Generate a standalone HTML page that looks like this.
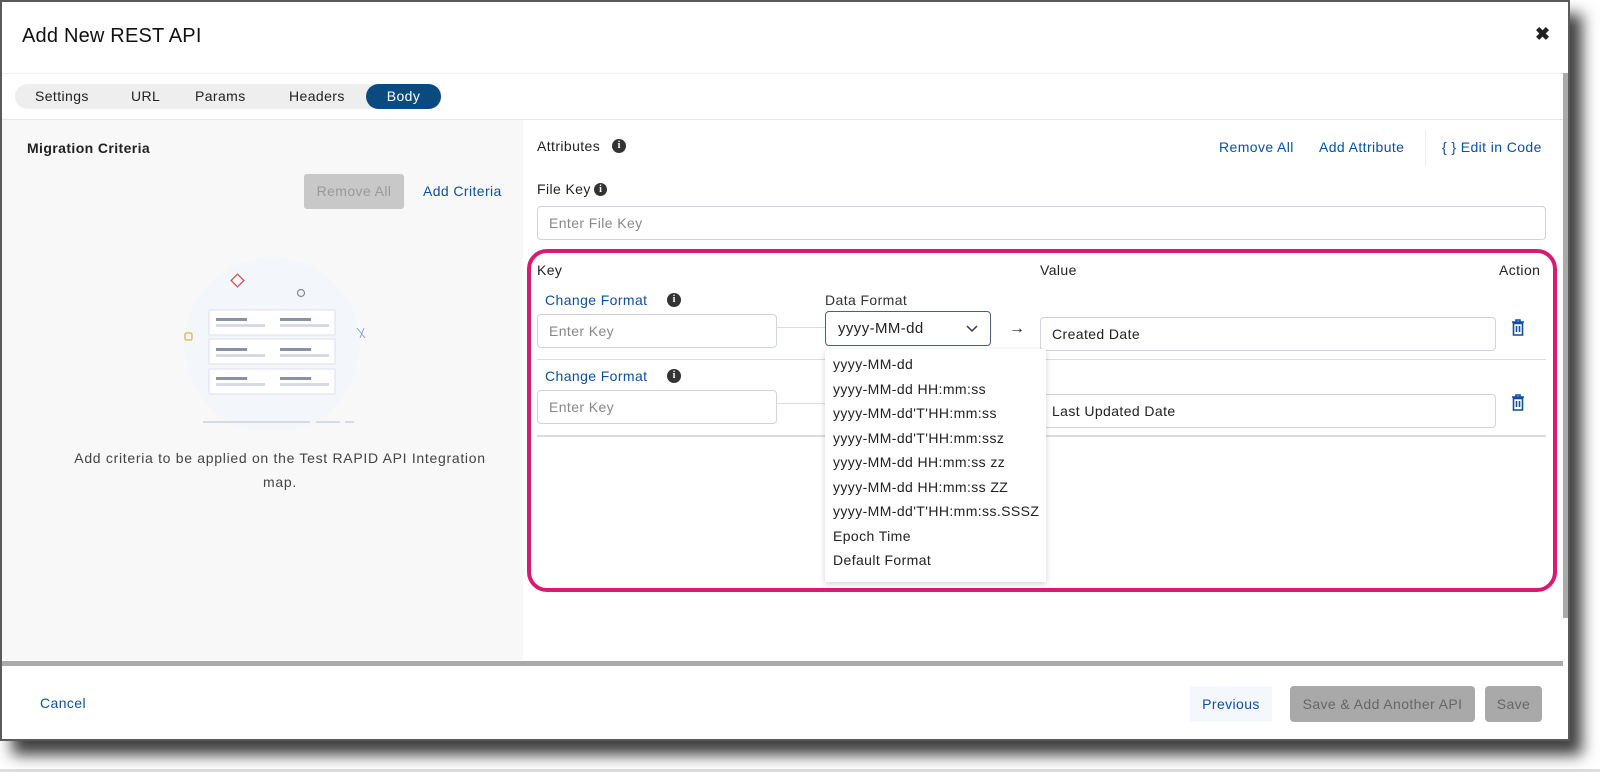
<!DOCTYPE html>
<html><head><meta charset="utf-8"><style>
*{box-sizing:border-box;margin:0;padding:0}
body{width:1600px;height:772px;background:#fff;font-family:"Liberation Sans",sans-serif;position:relative;overflow:hidden;color:#222;letter-spacing:0.4px}
.a{position:absolute}
.win{left:0;top:0;width:1570px;height:741px;background:#fff;border:2px solid #5a5a5a;box-shadow:12px 14px 14px rgba(0,0,0,.75)}
.blue{color:#0d4fa0}
.inp{background:#fff;border:1px solid #cfd4da;border-radius:4px;font-size:14px;color:#888;padding-left:11px;display:flex;align-items:center}
.info{width:14px;height:14px;border-radius:50%;background:#333;color:#fff;font-size:10px;font-weight:bold;text-align:center;line-height:14px;font-family:"Liberation Serif",serif;letter-spacing:0}
.dd div{height:24.5px;font-size:14px;color:#222;padding-left:8px}
</style></head><body>
<div class="a" style="left:0;top:769px;width:1600px;height:3px;background:#ddd"></div>
<div class="a win"></div>
<div class="a" style="left:22px;top:25px;font-size:20px;color:#111;letter-spacing:0.2px">Add New REST API</div>
<div class="a" style="left:1535px;top:24px;font-size:18px;font-weight:bold">✖</div>
<div class="a" style="left:2px;top:73px;width:1561px;height:1px;background:#eee"></div>
<div class="a" style="left:1563px;top:73px;width:5px;height:545px;background:#aaa"></div>
<!-- tabs -->
<div class="a" style="left:15px;top:84px;width:427px;height:25px;border-radius:13px;background:#eee"></div>
<div class="a" style="left:35px;top:88px;font-size:14px">Settings</div>
<div class="a" style="left:131px;top:88px;font-size:14px">URL</div>
<div class="a" style="left:195px;top:88px;font-size:14px">Params</div>
<div class="a" style="left:289px;top:88px;font-size:14px">Headers</div>
<div class="a" style="left:366px;top:84px;width:75px;height:25px;border-radius:13px;background:#0b4a7e;color:#fff;font-size:14px;text-align:center;line-height:25px">Body</div>
<div class="a" style="left:2px;top:119px;width:1561px;height:1px;background:#e6e6e6"></div>
<!-- left panel -->
<div class="a" style="left:2px;top:120px;width:521px;height:540px;background:#f8f8f8"></div>
<div class="a" style="left:27px;top:140px;font-size:14px;font-weight:bold">Migration Criteria</div>
<div class="a" style="left:304px;top:174px;width:100px;height:35px;background:#c8c8c8;border-radius:3px;color:#999;font-size:14px;text-align:center;line-height:35px">Remove All</div>
<div class="a blue" style="left:423px;top:183px;font-size:14px">Add Criteria</div>
<svg class="a" style="left:150px;top:250px" width="230" height="180">
<circle cx="122" cy="95" r="88" fill="#f3f7fb"/>
<rect x="83" y="26" width="9" height="9" transform="rotate(45 87.5 30.5)" fill="none" stroke="#d05050" stroke-width="1.3"/>
<circle cx="151" cy="43" r="3.5" fill="none" stroke="#889" stroke-width="1.2"/>
<rect x="35" y="83" width="7" height="7" rx="1.5" fill="none" stroke="#e0b040" stroke-width="1.3"/>
<path d="M207 78l8 10M210 88l4-10" stroke="#8aa0c8" stroke-width="1"/>
<g fill="#fff" stroke="#dde2ea">
<rect x="59" y="60" width="126" height="25"/><rect x="59" y="89" width="126" height="25"/><rect x="59" y="119" width="126" height="25"/></g>
<g fill="#8a90a8"><rect x="66" y="68" width="31" height="3"/><rect x="130" y="68" width="31" height="3"/><rect x="66" y="98" width="31" height="3"/><rect x="130" y="98" width="31" height="3"/><rect x="66" y="127" width="31" height="3"/><rect x="130" y="127" width="31" height="3"/></g>
<g fill="#d6dae2"><rect x="66" y="74" width="49" height="3"/><rect x="130" y="74" width="49" height="3"/><rect x="66" y="104" width="49" height="3"/><rect x="130" y="104" width="49" height="3"/><rect x="66" y="133" width="49" height="3"/><rect x="130" y="133" width="49" height="3"/></g>
<rect x="53" y="171" width="107" height="2" fill="#d6dae2"/><rect x="166" y="171" width="24" height="2" fill="#d6dae2"/><rect x="195" y="171" width="9" height="2" fill="#d6dae2"/>
</svg>
<div class="a" style="left:20px;top:446px;width:520px;text-align:center;font-size:14px;color:#444;line-height:24px;letter-spacing:0.7px">Add criteria to be applied on the Test RAPID API Integration<br>map.</div>
<!-- right -->
<div class="a" style="left:537px;top:138px;font-size:14px">Attributes</div>
<div class="a info" style="left:612px;top:139px">i</div>
<div class="a blue" style="left:1219px;top:139px;font-size:14px">Remove All</div>
<div class="a blue" style="left:1319px;top:139px;font-size:14px">Add Attribute</div>
<div class="a" style="left:1425px;top:130px;width:1px;height:36px;background:#eee"></div>
<div class="a blue" style="left:1442px;top:139px;font-size:14px">{ } Edit in Code</div>
<div class="a" style="left:537px;top:181px;font-size:14px">File Key</div>
<div class="a info" style="left:594px;top:183px;width:13px;height:13px;line-height:13px">i</div>
<div class="a inp" style="left:537px;top:206px;width:1009px;height:34px">Enter File Key</div>
<!-- pink -->
<div class="a" style="left:527px;top:249px;width:1030px;height:343px;border:4px solid #d81b72;border-radius:20px"></div>
<div class="a" style="left:537px;top:262px;font-size:14px">Key</div>
<div class="a" style="left:1040px;top:262px;font-size:14px">Value</div>
<div class="a" style="left:1499px;top:262px;font-size:14px">Action</div>
<div class="a blue" style="left:545px;top:292px;font-size:14px">Change Format</div>
<div class="a info" style="left:667px;top:293px">i</div>
<div class="a" style="left:825px;top:292px;font-size:14px;color:#333">Data Format</div>
<div class="a inp" style="left:537px;top:314px;width:240px;height:34px">Enter Key</div>
<div class="a" style="left:777px;top:327px;width:48px;height:1px;background:#ddd"></div>
<div class="a" style="left:825px;top:311px;width:166px;height:35px;border:1px solid #4a6080;border-radius:4px;font-size:15px;padding:8px 12px">yyyy-MM-dd<svg class="a" style="left:140px;top:13px" width="12" height="8"><path d="M1 1l5 5 5-5" fill="none" stroke="#335" stroke-width="1.5"/></svg></div>
<div class="a" style="left:1009px;top:320px;font-size:16px">→</div>
<div class="a inp" style="left:1040px;top:317px;width:456px;height:34px;color:#222">Created Date</div>
<svg class="a" style="left:1511px;top:319px" width="14" height="17"><path d="M1 3h12M5 3V1h4v2M2.5 4.5h9V16h-9z M5.5 7v6M8.5 7v6" fill="none" stroke="#0d4fa0" stroke-width="1.6"/></svg>
<div class="a" style="left:537px;top:359px;width:1009px;height:1px;background:#ddd"></div>
<div class="a blue" style="left:545px;top:368px;font-size:14px">Change Format</div>
<div class="a info" style="left:667px;top:369px">i</div>
<div class="a inp" style="left:537px;top:390px;width:240px;height:34px">Enter Key</div>
<div class="a" style="left:777px;top:403px;width:48px;height:1px;background:#ddd"></div>
<div class="a inp" style="left:1040px;top:394px;width:456px;height:34px;color:#222">Last Updated Date</div>
<svg class="a" style="left:1511px;top:394px" width="14" height="17"><path d="M1 3h12M5 3V1h4v2M2.5 4.5h9V16h-9z M5.5 7v6M8.5 7v6" fill="none" stroke="#0d4fa0" stroke-width="1.6"/></svg>
<div class="a" style="left:537px;top:435px;width:1009px;height:2px;background:#ddd"></div>
<div class="a dd" style="left:825px;top:349px;width:221px;height:233px;background:#fff;box-shadow:0 2px 6px rgba(0,0,0,.18);padding-top:7px">
<div>yyyy-MM-dd</div><div>yyyy-MM-dd HH:mm:ss</div><div>yyyy-MM-dd'T'HH:mm:ss</div><div>yyyy-MM-dd'T'HH:mm:ssz</div><div>yyyy-MM-dd HH:mm:ss zz</div><div>yyyy-MM-dd HH:mm:ss ZZ</div><div>yyyy-MM-dd'T'HH:mm:ss.SSSZ</div><div>Epoch Time</div><div>Default Format</div></div>
<!-- footer -->
<div class="a" style="left:2px;top:661px;width:1561px;height:5px;background:#aaa"></div>
<div class="a blue" style="left:40px;top:695px;font-size:14px">Cancel</div>
<div class="a blue" style="left:1190px;top:686px;width:82px;height:36px;background:#f4f7fb;font-size:14px;text-align:center;line-height:36px">Previous</div>
<div class="a" style="left:1290px;top:686px;width:185px;height:36px;background:#a9a9a9;border-radius:4px;color:#666;font-size:14px;text-align:center;line-height:36px">Save &amp; Add Another API</div>
<div class="a" style="left:1485px;top:686px;width:57px;height:36px;background:#a9a9a9;border-radius:4px;color:#666;font-size:14px;text-align:center;line-height:36px">Save</div>
</body></html>
